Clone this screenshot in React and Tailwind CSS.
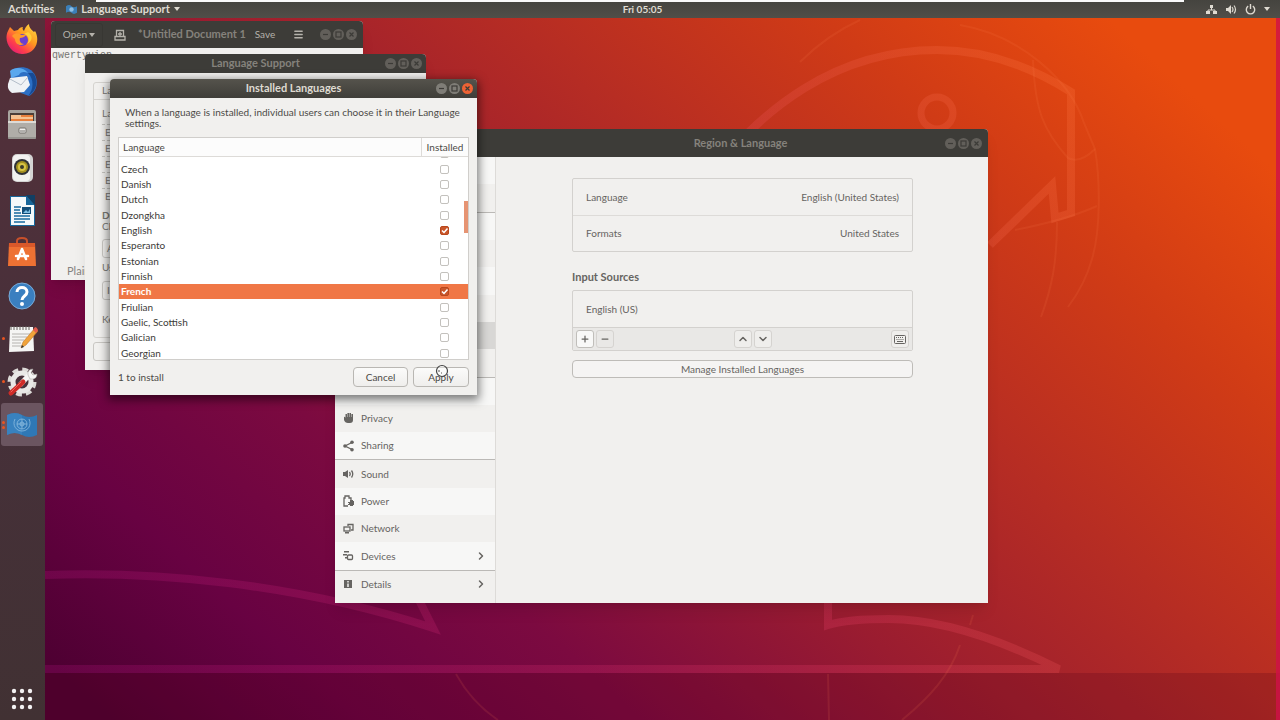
import { useEffect, useRef, useState } from 'react';
import { ChevronRight, ChevronUp, ChevronDown, Plus, Minus, Menu } from 'lucide-react';
import clsx from 'clsx';

const languages = [
  'Croatian',
  'Czech',
  'Danish',
  'Dutch',
  'Dzongkha',
  'English',
  'Esperanto',
  'Estonian',
  'Finnish',
  'French',
  'Friulian',
  'Gaelic, Scottish',
  'Galician',
  'Georgian',
];

const menuLanguages = ['en_US', 'en', 'en_AU', 'en_CA', 'en_GB'];

/* ---------- Wallpaper ---------- */

const Wallpaper = () => (
  <svg className="absolute inset-0 h-full w-full" viewBox="0 0 1280 720" preserveAspectRatio="none" aria-hidden="true">
    <defs>
      <linearGradient id="sky" gradientUnits="userSpaceOnUse" x1="200" y1="800" x2="1000" y2="-80">
        <stop offset="0" stopColor="#4e0032" />
        <stop offset="0.14" stopColor="#680242" />
        <stop offset="0.3" stopColor="#7c0a40" />
        <stop offset="0.48" stopColor="#9a1c30" />
        <stop offset="0.66" stopColor="#b52c24" />
        <stop offset="0.84" stopColor="#d03b16" />
        <stop offset="1" stopColor="#e84b0e" />
      </linearGradient>
      <linearGradient id="line" gradientUnits="userSpaceOnUse" x1="45" y1="700" x2="1100" y2="60">
        <stop offset="0" stopColor="#b01080" stopOpacity="0.24" />
        <stop offset="0.6" stopColor="#d8385a" stopOpacity="0.32" />
        <stop offset="1" stopColor="#ff7a3c" stopOpacity="0.25" />
      </linearGradient>
    </defs>
    <rect width="1280" height="720" fill="url(#sky)" />
    <rect y="673" width="1280" height="47" fill="#500018" fillOpacity="0.22" />
    <g fill="none" stroke="url(#line)" strokeWidth="8">
      <path d="M700 190C760 105 840 50 937 50c50 0 96 18 134 42v121l-16 5-3-33-62 60" />
      <circle cx="937" cy="113" r="16" strokeWidth="7" />
      <path d="M45 575c110-4 250 8 388 53l-15-30" />
      <path d="M45 669h1014c-60-30-120-50-170-50-30 0-48 2-61 6v-25" />
    </g>
    <g fill="none" stroke="#ff8050" strokeOpacity="0.12" strokeWidth="2">
      <path d="M960 25c60 10 110 55 124 98l11 26c5 30 6 80-3 110-5 18-12 32-24 48" />
      <path d="M1033 60c2 50 10 70 35 98 10 5 20-2 27-9" />
      <path d="M1015 230c30-6 60-14 82-24" />
      <path d="M1057 222c0 40-5 65-16 95" />
      <path d="M860 20c-22 10-42 24-60 42" />
      <path d="M828 674l1 46M960 645c-10 30-30 52-58 75M973 615l-3 10" />
      <path d="M456 674c10 18 24 34 42 46" />
    </g>
    <rect x="1276" y="18" width="4" height="702" fill="#d01048" fillOpacity="0.8" />
  </svg>
);

/* ---------- Dock icons ---------- */

const FirefoxIcon = () => (
  <svg viewBox="0 0 32 32" className="size-8">
    <defs>
      <linearGradient id="fox" x1="1" y1="0" x2="0.2" y2="1">
        <stop offset="0" stopColor="#ffe14a" />
        <stop offset="0.45" stopColor="#ff9a1f" />
        <stop offset="0.75" stopColor="#ff3f4b" />
        <stop offset="1" stopColor="#e01a7a" />
      </linearGradient>
    </defs>
    <path d="M2 8l2-4 4 4 4-1c1-2 3-3 5-3-1 2 0 3 1 4 1-3 2-5 5-7 0 4 3 6 5 8l1-1c5 8 2 22-12 23C5 32-3 18 2 8z" fill="url(#fox)" />
    <circle cx="16" cy="17" r="6" fill="#6b3fd0" />
    <path d="M6 13c3-4 7-3 9-1h5c-1 2-4 3-6 3-1 3 1 6 4 6-5 3-9-1-9-5z" fill="#ff9a2a" />
    <path d="M18 11c5 1 6 7 3 10 6-3 6-9 1-12z" fill="#ffcf3a" />
  </svg>
);

const ThunderbirdIcon = () => (
  <svg viewBox="0 0 32 32" className="size-8">
    <path d="M6 4C14-1 25 1 29 9c4 8 1 17-6 21l-8-3L4 15z" fill="#2c6fc4" />
    <path d="M4 5c6-5 14-3 18 2-4-2-8-1-9 2l-8 3z" fill="#5aa8ee" />
    <path d="M22 7c6 6 6 16 0 23 9-5 11-16 5-23z" fill="#174a94" />
    <path d="M4 12l17-2 3 9-6 7-12 1q-5-3-4-9z" fill="#eff2f5" />
    <path d="M4 13l11 6 7-8" fill="none" stroke="#b3bdc9" />
  </svg>
);

const FilesIcon = () => (
  <svg viewBox="0 0 32 32" className="size-8">
    <rect x="2" y="1" width="28" height="15" rx="2" fill="#a8a59f" />
    <rect x="4" y="4" width="24" height="10" fill="#4c3f38" />
    <rect x="5" y="6" width="22" height="8" fill="#e8803c" />
    <path d="M5 6h10v2h12v2H5z" fill="#f6c392" />
    <rect x="2" y="12" width="28" height="18" rx="1" fill="#b0ada8" />
    <path d="M2 12h28v2H2z" fill="#dddbd7" />
    <path d="M2 29h28" stroke="#7d7a76" />
    <rect x="13" y="19" width="7" height="5" rx="1" fill="#f1f0ee" stroke="#74716c" />
    <path d="M14 22h5" stroke="#74716c" />
  </svg>
);

const RhythmboxIcon = () => (
  <svg viewBox="0 0 32 32" className="size-8">
    <rect x="6" y="2" width="21" height="28" rx="5" fill="#d4d4d3" />
    <rect x="7" y="3" width="17" height="26" rx="4" fill="#f2f2f1" />
    <circle cx="16" cy="15" r="8" fill="#303236" />
    <circle cx="16" cy="15" r="6" fill="#a4901f" />
    <circle cx="16" cy="15" r="4" fill="#d8c444" />
    <circle cx="16" cy="15" r="2" fill="#3b3a2a" />
  </svg>
);

const WriterIcon = () => (
  <svg viewBox="0 0 32 32" className="size-8">
    <path d="M4 1h17l8 9v21H4z" fill="#17669a" />
    <path d="M5 2h15v8h8v20H5z" fill="#f4f8fa" />
    <path d="M20 0h9v10z" fill="#123f63" />
    <path d="M8 12h7M8 15h6M8 18h7M8 21h16M8 24h16M8 27h11" stroke="#176a9e" strokeWidth="1.5" />
    <rect x="16" y="12" width="9" height="7" fill="#124d78" />
    <path d="M17 18l3-3 2 2 2-3v4z" fill="#7fc0e4" />
  </svg>
);

const SoftwareIcon = () => (
  <svg viewBox="0 0 32 32" className="size-8">
    <path d="M11 7V4q0-3 5-3t5 3v3" fill="none" stroke="#c8502a" strokeWidth="2" />
    <path d="M3 6h26l1 23H2z" fill="#ee7133" />
    <path d="M3 6h26v4H3z" fill="#d9582a" />
    <path d="M16 12l-4 10M16 12l4 10M10 19h12" fill="none" stroke="#fff" strokeWidth="2.5" strokeLinecap="round" />
  </svg>
);

const HelpIcon = () => (
  <svg viewBox="0 0 32 32" className="size-8">
    <circle cx="16" cy="16" r="13" fill="#3a7fc0" stroke="#78abd9" />
    <path d="M11 12c0-6 10-6 10 0 0 4-5 4-5 8" fill="none" stroke="#fff" strokeWidth="3" />
    <circle cx="16" cy="24" r="2" fill="#fff" />
  </svg>
);

const NotesIcon = () => (
  <svg viewBox="0 0 32 32" className="size-8">
    <path d="M4 4h23l1 24-25 1z" fill="#f5f5f4" />
    <path d="M5 3v4M8 3v4M11 3v4M14 3v4M17 3v4M20 3v4M23 3v4" stroke="#66635f" />
    <path d="M6 11h18M6 14h15M6 17h12M6 20h9M6 23h12" stroke="#b5b3b0" />
    <path d="M15 25l2-6L29 5l3 3-12 14z" fill="#f0a33a" stroke="#b56b1c" strokeWidth="0.5" />
    <path d="M27 7l2-3q2 0 3 3l-2 3z" fill="#e45c50" />
    <path d="M15 25l1-3 2 2z" fill="#333" />
  </svg>
);

const SettingsIcon = () => (
  <svg viewBox="0 0 32 32" className="size-8">
    <circle cx="16" cy="16" r="12.500" fill="none" stroke="#dcdad7" strokeWidth="4" strokeDasharray="5.8 4" />
    <circle cx="16" cy="16" r="9" fill="none" stroke="#e9e8e6" strokeWidth="5" />
    <path d="M14 19L24 8" stroke="#f6f5f4" strokeWidth="5" />
    <path d="M22 9q-1-6 5-6l-2 4 2 2 4-1q0 6-7 5z" fill="#f6f5f4" stroke="#a09d99" strokeWidth="0.5" />
    <path d="M5 27L17 16" stroke="#cf2b27" strokeWidth="5" strokeLinecap="round" />
    <path d="M5 26L15 16" stroke="#ee6560" strokeLinecap="round" />
  </svg>
);

const FlagIcon = () => (
  <svg viewBox="0 0 32 32" className="size-8">
    <path d="M1 6q8-4 15 0t15 0v20q-8 4-15 0t-15 0z" fill="#2f78b6" />
    <path d="M1 6q8-4 15 0v20q-8-4-15 0z" fill="#3f89c4" fillOpacity="0.6" />
    <g fill="none" stroke="#8dbce0" strokeWidth="0.8">
      <circle cx="16" cy="15" r="5" />
      <circle cx="16" cy="15" r="2" />
      <path d="M11 15h10M16 10v10M9 10c-3 6 1 12 7 12s10-6 7-12" />
    </g>
  </svg>
);

const dockItems = [
  { name: 'Firefox', Icon: FirefoxIcon },
  { name: 'Thunderbird', Icon: ThunderbirdIcon },
  { name: 'Files', Icon: FilesIcon },
  { name: 'Rhythmbox', Icon: RhythmboxIcon },
  { name: 'LibreOffice Writer', Icon: WriterIcon },
  { name: 'Ubuntu Software', Icon: SoftwareIcon },
  { name: 'Help', Icon: HelpIcon },
  { name: 'Text Editor', Icon: NotesIcon, windows: 1 },
  { name: 'Settings', Icon: SettingsIcon, windows: 1 },
  { name: 'Language Support', Icon: FlagIcon, windows: 2, active: true },
];

/* ---------- Settings sidebar icons ---------- */

const PrivacyIcon = () => (
  <svg viewBox="0 0 12 12" className="size-3" fill="currentColor">
    <path d="M1 5q1-1 1.500 1V2H4v3h.4V1H6v4h.4V1H8v4h.4V2H10v6q0 3-3 3H5Q2 11 1 8z" />
  </svg>
);

const SharingIcon = () => (
  <svg viewBox="0 0 12 12" className="size-3" fill="currentColor">
    <path d="M9 2.500L2 6l7 3.500" fill="none" stroke="currentColor" strokeWidth="1.300" />
    <circle cx="9" cy="2.300" r="1.800" />
    <circle cx="2" cy="6" r="1.800" />
    <circle cx="9" cy="9.700" r="1.800" />
  </svg>
);

const SoundIcon = () => (
  <svg viewBox="0 0 12 12" className="size-3">
    <path d="M0 4h2l3-2v8L2 8H0z" fill="currentColor" />
    <path d="M6.500 4q1.500 2 0 4M8.500 2.500q2.500 3.500 0 7" fill="none" stroke="currentColor" strokeWidth="1.300" />
  </svg>
);

const PowerIcon = () => (
  <svg viewBox="0 0 12 12" className="size-3">
    <path d="M5 11H1V3h1V1h4v2h2v2" fill="none" stroke="currentColor" strokeWidth="1.300" />
    <path d="M7 5h3v1h1v4h-1v1H7v-1H5V9h1V8H5V7h2z" fill="currentColor" />
  </svg>
);

const NetworkIcon = () => (
  <svg viewBox="0 0 12 12" className="size-3">
    <path d="M5 3V1.500h5V7H8" fill="none" stroke="currentColor" strokeWidth="1.300" />
    <rect x="1" y="4" width="6" height="4" fill="none" stroke="currentColor" strokeWidth="1.300" />
    <path d="M2 9h4v1.500H2z" fill="currentColor" />
  </svg>
);

const DevicesIcon = () => (
  <svg viewBox="0 0 12 12" className="size-3">
    <path d="M1 1h5v1.500H1zM0 4h4v1.500H0zM2 7h2v1.500H2z" fill="currentColor" />
    <rect x="4.500" y="5" width="5" height="4.500" rx="1" fill="none" stroke="currentColor" strokeWidth="1.300" />
  </svg>
);

const DetailsIcon = () => (
  <svg viewBox="0 0 12 12" className="size-3">
    <rect x="1" y="2" width="8" height="8" fill="currentColor" />
    <path d="M5 3v1.500M5 5.500v3.500" stroke="#f2f1f0" strokeWidth="1.500" />
  </svg>
);

// The first rows of the panel list stay behind the dialog
const sidebarRows = [
  { id: 'wifi', light: true },
  { id: 'bluetooth', line: true },
  { id: 'background', light: true },
  { id: 'dock' },
  { id: 'notifications', light: true },
  { id: 'search' },
  { id: 'region', selected: true },
  { id: 'access', line: true },
  { id: 'accounts', light: true },
  { id: 'privacy', label: 'Privacy', Icon: PrivacyIcon },
  { id: 'sharing', label: 'Sharing', Icon: SharingIcon, light: true, line: true },
  { id: 'sound', label: 'Sound', Icon: SoundIcon },
  { id: 'power', label: 'Power', Icon: PowerIcon, light: true },
  { id: 'network', label: 'Network', Icon: NetworkIcon },
  { id: 'devices', label: 'Devices', Icon: DevicesIcon, more: true, light: true, line: true },
  { id: 'details', label: 'Details', Icon: DetailsIcon, more: true },
];

/* ---------- Shared parts ---------- */

const WindowButtons = ({ active }) => (
  <div className="flex gap-[2px] justify-self-end pr-1">
    <button aria-label="Minimize" className="size-[11px]">
      <svg viewBox="0 0 11 11" className={active ? 'text-[#7f7d77]' : 'text-[#625f5a]'}>
        <circle cx="5.500" cy="5.500" r="5.500" fill="currentColor" />
        <path d="M3 5.500h5" stroke="#3c3b37" strokeWidth="1.200" />
      </svg>
    </button>
    <button aria-label="Maximize" className="size-[11px]">
      <svg viewBox="0 0 11 11" className={active ? 'text-[#7f7d77]' : 'text-[#625f5a]'}>
        <circle cx="5.500" cy="5.500" r="5.500" fill="currentColor" />
        <rect x="3" y="3" width="5" height="5" fill="none" stroke="#3c3b37" strokeWidth="1.200" />
      </svg>
    </button>
    <button aria-label="Close" className="size-[11px]">
      <svg viewBox="0 0 11 11" className={active ? 'text-[#ee6234]' : 'text-[#625f5a]'}>
        <circle cx="5.500" cy="5.500" r="5.500" fill="currentColor" />
        <path d="M3.500 3.500l4 4M7.500 3.500l-4 4" stroke="#3c3b37" strokeWidth="1.200" />
      </svg>
    </button>
  </div>
);

const TitleBar = ({ title, active }) => (
  <header
    className={clsx(
      'grid h-[19px] grid-cols-[1fr_auto_1fr] items-center rounded-t-[4px] text-[11px] font-bold',
      active ? 'bg-linear-to-b from-[#55534c] to-[#3f3e39] text-[#dfdbd2]' : 'bg-[#3d3c38] text-[#85827c]'
    )}
  >
    <span />
    <h2>{title}</h2>
    <WindowButtons active={active} />
  </header>
);

const TopBar = () => (
  <header className="relative grid h-[18px] grid-cols-[1fr_auto_1fr] items-center bg-linear-to-b from-[#45443f] to-[#504e48] text-[11px] font-bold text-[#dfdbd2]">
    <div className="absolute top-0 right-24 left-24 h-[2px] bg-[#fafafa]" />
    <div className="flex items-center pl-2">
      <button>Activities</button>
      <button className="ml-3 flex items-center gap-1">
        <svg viewBox="0 0 10 10" className="size-[11px]">
          <path d="M0 2q3-2 5 0t5 0v6q-3 2-5 0t-5 0z" fill="#3b7fb8" />
          <circle cx="5" cy="5" r="2" fill="#8fbfe2" />
        </svg>
        Language Support
        <svg viewBox="0 0 6 4" className="h-1 w-[6px]" fill="currentColor">
          <path d="M0 0h6L3 4z" />
        </svg>
      </button>
    </div>
    <button className="pl-[5px] text-[10px]">Fri 05:05</button>
    <button aria-label="System menu" className="flex items-center gap-2 justify-self-end pr-[10px]">
      <svg viewBox="0 0 11 11" className="size-[11px]" fill="currentColor">
        <path d="M4 1h3v3H4zM0 7h4v3H0zM7 7h4v3H7z" />
        <path d="M5.500 4v2M2 7.500V6h7v1.500" fill="none" stroke="currentColor" />
      </svg>
      <svg viewBox="0 0 12 11" className="h-[11px] w-3">
        <path d="M1 4h2l3-3v9L3 7H1z" fill="currentColor" />
        <path d="M7 3q2 2.500 0 5M9 1.500q3 4 0 8" fill="none" stroke="currentColor" strokeWidth="1.200" />
      </svg>
      <svg viewBox="0 0 11 11" className="size-[11px]" fill="none" stroke="currentColor" strokeWidth="1.400">
        <path d="M3.200 2.200a4.200 4.200 0 1 0 4.600 0M5.500 0v5" />
      </svg>
      <svg viewBox="0 0 6 4" className="h-1 w-[6px]" fill="currentColor">
        <path d="M0 0h6L3 4z" />
      </svg>
    </button>
  </header>
);

const Dock = () => (
  <nav className="relative flex w-[45px] flex-col justify-between bg-linear-to-b from-[#55303a] via-[#47303a] to-[#413133]">
    <ul className="flex h-[428px] flex-col">
      {dockItems.map(({ name, Icon, windows = 0, active }) => (
        <li key={name} className="relative flex-1 pr-[2px] pl-px">
          <button
            aria-label={name}
            className={clsx('flex h-full w-full items-center justify-center rounded-[3px]', active && 'bg-[#6b5560]')}
          >
            <Icon />
          </button>
          <div className="absolute inset-y-0 left-[2px] flex flex-col justify-center gap-[2px]">
            {[...Array(windows)].map((_, i) => (
              <span key={i} className="size-[3px] rounded-full bg-[#e95420]" />
            ))}
          </div>
        </li>
      ))}
    </ul>
    <button aria-label="Show Applications" className="mb-[10px] flex justify-center pr-px">
      <svg viewBox="0 0 22 22" className="size-[22px]" fill="#f4f2f3">
        {[3, 11, 19].map((y) => [3, 11, 19].map((x) => <circle key={`${x}-${y}`} cx={x} cy={y} r="2.200" />))}
      </svg>
    </button>
  </nav>
);

/* ---------- Windows ---------- */

const EditorWindow = () => (
  <section className="absolute top-[21px] left-[51px] flex h-[259px] w-[312px] flex-col rounded-t-[4px] bg-[#f1f0ee] shadow-lg">
    <header className="flex h-[27px] shrink-0 items-center rounded-t-[4px] bg-[#3d3c38] text-[10px] text-[#b5b2ab]">
      <button className="ml-1 flex h-6 w-12 items-center justify-center gap-[2px] rounded-[3px] border border-[#383733]">
        Open
        <svg viewBox="0 0 6 4" className="h-1 w-[6px]" fill="currentColor">
          <path d="M0 0h6L3 4z" />
        </svg>
      </button>
      <button aria-label="New document" className="ml-[11px]">
        <svg viewBox="0 0 12 12" className="size-3" fill="none" stroke="currentColor" strokeWidth="1.300">
          <path d="M2.500 7V1.500h7V7M1 7.500h10V11H1zM6 3v4M4 5h4" />
        </svg>
      </button>
      <h2 className="flex-1 pl-3 text-[11px] font-bold whitespace-nowrap text-[#85827c]">*Untitled Document 1</h2>
      <button className="w-9">Save</button>
      <button aria-label="Menu" className="mr-4 ml-[10px]">
        <Menu className="size-[11px]" strokeWidth={3} />
      </button>
      <div className="pr-[2px]">
        <WindowButtons />
      </div>
    </header>
    <textarea
      aria-label="Document text"
      className="w-full flex-1 resize-none px-px font-['Liberation_Mono',monospace] text-[10px] text-[#777672] outline-none"
      defaultValue="qwertyuiop"
    />
    <footer className="h-[18px] pl-4 text-[11px] leading-[18px] text-[#85827e]">Plain</footer>
  </section>
);

const SupportWindow = () => (
  <section className="absolute top-[54px] left-[85px] w-[341px] rounded-t-[4px] bg-[#f1f0ee] text-[10px] text-[#7a7874] shadow-lg">
    <TitleBar title="Language Support" />
    <div className="px-2 pt-[9px] pb-[9px]">
      <div className="rounded-[3px] border border-[#d5d3cf]">
        <div className="h-[17px] border-b border-[#d5d3cf] pl-2 leading-[15px]">
          <button>Lang</button>
        </div>
        <div className="px-2 pt-[6px]">
          <p className="h-[18px] leading-[14px]">Lang</p>
          <ul>
            {menuLanguages.map((code) => (
              <li key={code} className="h-4 border-t border-dashed border-[#c4c2be] pl-[3px] leading-[15px]">
                En
              </li>
            ))}
          </ul>
          <p className="mt-[6px] leading-[11px] font-bold">Drag</p>
          <p className="leading-[10px]">Ch</p>
          <button className="mt-2 block h-[19px] rounded-[3px] border border-[#c9c7c3] px-1">Ap</button>
          <p className="mt-[2px] leading-[14px]">Use</p>
          <button className="mt-[7px] block h-[19px] rounded-[3px] border border-[#c9c7c3] px-1">Ins</button>
          <p className="mt-3 h-[25px] leading-[14px]">Key</p>
        </div>
      </div>
      <button aria-label="Help" className="mt-1 block h-[19px] w-20 rounded-[3px] border border-[#c9c7c3]" />
    </div>
  </section>
);

const SettingsWindow = () => (
  <section className="absolute top-[129px] left-[335px] flex h-[474px] w-[653px] flex-col rounded-t-[4px] bg-[#f1f0ee] text-[10px] text-[#666461] shadow-lg">
    <header className="flex h-7 shrink-0 rounded-t-[4px] bg-[#3d3c38]">
      <div className="w-[160px]" />
      <div className="grid flex-1 grid-cols-[1fr_auto_1fr] items-center pr-[2px] text-[11px] font-bold text-[#85827c]">
        <span />
        <h2>Region &amp; Language</h2>
        <WindowButtons />
      </div>
    </header>
    <div className="flex flex-1">
      <nav className="w-[161px] border-r border-[#dddbd8]">
        <ul className="flex h-[441px] flex-col">
          {sidebarRows.map(({ id, label, Icon, more, light, line, selected }) => (
            <li
              key={id}
              className={clsx(
                'flex flex-1 items-center pl-2',
                line && 'border-b border-[#bbb9b6]',
                light && 'bg-[#f7f7f6]',
                selected && 'bg-[#d8d7d5]'
              )}
            >
              {label && (
                <a href="#" className="flex flex-1 items-center">
                  <Icon />
                  <span className="ml-[6px] flex-1">{label}</span>
                  {more && <ChevronRight className="mr-2 size-3" strokeWidth={3} />}
                </a>
              )}
            </li>
          ))}
        </ul>
      </nav>
      <main className="flex-1 pt-[21px] pr-[75px] pl-[76px]">
        <dl className="rounded-[2px] border border-[#d3d1ce] px-[13px]">
          <div className="flex h-9 items-center justify-between">
            <dt>Language</dt>
            <dd>English (United States)</dd>
          </div>
          <div className="-mx-[13px] flex h-9 items-center justify-between border-t border-[#dddbd8] px-[13px]">
            <dt>Formats</dt>
            <dd>United States</dd>
          </div>
        </dl>
        <h3 className="mt-[17px] mb-[5px] text-[11px] leading-4 font-bold">Input Sources</h3>
        <div className="rounded-[2px] border border-[#d3d1ce]">
          <p className="flex h-9 items-center px-[13px]">English (US)</p>
          <div className="flex h-[23px] items-center justify-between border-t border-[#d3d1ce] bg-[#e9e8e6] px-[3px]">
            <div className="flex gap-[2px]">
              <button aria-label="Add" className="flex h-[18px] w-[18px] items-center justify-center rounded-[3px] border border-[#c0beba] bg-[#f8f8f7]">
                <Plus className="size-[10px]" strokeWidth={3} />
              </button>
              <button aria-label="Remove" className="flex h-[18px] w-[18px] items-center justify-center rounded-[3px] border border-[#d5d3d0]">
                <Minus className="size-[10px]" strokeWidth={3} />
              </button>
            </div>
            <div className="flex gap-[2px]">
              <button aria-label="Move up" className="flex h-[18px] w-[18px] items-center justify-center rounded-[3px] border border-[#d5d3d0] bg-[#efeeec]">
                <ChevronUp className="size-3" strokeWidth={3} />
              </button>
              <button aria-label="Move down" className="flex h-[18px] w-[18px] items-center justify-center rounded-[3px] border border-[#d5d3d0] bg-[#efeeec]">
                <ChevronDown className="size-3" strokeWidth={3} />
              </button>
            </div>
            <button aria-label="Keyboard layout" className="flex h-[18px] w-[18px] items-center justify-center rounded-[3px] border border-[#d5d3d0] bg-[#efeeec]">
              <svg viewBox="0 0 12 9" className="h-[9px] w-3">
                <rect x="0.500" y="0.500" width="11" height="8" rx="1" fill="#f1f0ee" stroke="currentColor" />
                <path d="M2 2.500h8M2.500 4.500h8" stroke="currentColor" strokeDasharray="1 1" />
                <path d="M3 6.500h6" stroke="currentColor" />
              </svg>
            </button>
          </div>
        </div>
        <button className="mt-[9px] block h-[18px] w-full rounded-[4px] border border-[#bebcb8] bg-[#f5f4f3] leading-4">Manage Installed Languages</button>
      </main>
    </div>
  </section>
);

const LanguageRow = ({ name, checked, selected, onToggle }) => (
  <tr className={selected ? 'bg-[#f07746] font-bold text-white' : 'text-[#3c3b38]'}>
    <td className="pl-[2px] leading-[15px]">
      <label htmlFor={`lang-${name}`}>{name}</label>
    </td>
    <td className="leading-[15px]">
      <div className="relative mx-auto size-[9px]">
        <input
          id={`lang-${name}`}
          type="checkbox"
          checked={checked}
          onChange={onToggle}
          className="block size-[9px] appearance-none rounded-[2px] border border-[#c3c1bd] bg-white checked:border-[#b9471c] checked:bg-[#c9562a]"
        />
        {checked && (
          <svg viewBox="0 0 9 9" className="pointer-events-none absolute inset-0" fill="none" stroke="#fff" strokeWidth="1.500">
            <path d="M2 4.500l2 2L7.500 2.500" />
          </svg>
        )}
      </div>
    </td>
  </tr>
);

const InstalledDialog = () => {
  const [installed, setInstalled] = useState(['English', 'French']);
  const listRef = useRef(null);

  useEffect(() => {
    listRef.current.scrollTop = 11;
  }, []);

  const toggle = (name) => {
    setInstalled((prev) => (prev.includes(name) ? prev.filter((n) => n !== name) : [...prev, name]));
  };

  return (
    <section
      role="dialog"
      aria-label="Installed Languages"
      className="absolute top-[79px] left-[110px] w-[367px] rounded-t-[4px] bg-[#f1f0ee] text-[10px] text-[#4c4a47] shadow-[0_3px_10px_2px_rgba(0,0,0,0.5)]"
    >
      <TitleBar title="Installed Languages" active />
      <div className="px-2 pt-[9px] pb-2">
        <p className="px-[7px] leading-[11px]">
          When a language is installed, individual users can choose it in their Language settings.
        </p>
        <div className="relative mt-2 border border-[#d0cecb] bg-white">
          <div ref={listRef} className="h-[221px] overflow-y-auto [scrollbar-width:none]">
            <table className="h-[234px] w-full border-separate border-spacing-0">
              <thead className="sticky top-0 z-10">
                <tr className="h-[19px] bg-[#fcfcfc] text-left">
                  <th className="border-b border-[#dddbd8] pl-1 leading-[18px] font-normal">Language</th>
                  <th className="w-[47px] border-b border-l border-[#dddbd8] text-center leading-[18px] font-normal">Installed</th>
                </tr>
              </thead>
              <tbody>
                {languages.map((name) => (
                  <LanguageRow
                    key={name}
                    name={name}
                    checked={installed.includes(name)}
                    selected={name === 'French'}
                    onToggle={() => toggle(name)}
                  />
                ))}
              </tbody>
            </table>
          </div>
          <div className="absolute top-[63px] right-0 z-20 h-8 w-1 bg-[#e69473]" />
        </div>
        <div className="mt-[7px] flex items-center gap-[5px]">
          <p className="flex-1">1 to install</p>
          <button className="h-5 w-[55px] rounded-[4px] border border-[#b9b7b3] bg-linear-to-b from-[#fbfbfa] to-[#efeeec]">Cancel</button>
          <button className="h-5 w-14 rounded-[4px] border border-[#b9b7b3] bg-linear-to-b from-[#fbfbfa] to-[#efeeec]">Apply</button>
        </div>
      </div>
    </section>
  );
};

const BusyCursor = () => (
  <svg viewBox="0 0 14 14" className="pointer-events-none absolute top-[364px] left-[435px] size-[14px]">
    <circle cx="7" cy="7" r="5.500" fill="#fff" fillOpacity="0.4" stroke="#444" strokeWidth="1.200" />
    <path d="M4 6v2M6 9h1" stroke="#555" />
  </svg>
);

const App = () => (
  <div className="relative flex h-screen flex-col overflow-hidden font-['Lato','Open_Sans',sans-serif]">
    <Wallpaper />
    <TopBar />
    <div className="flex flex-1">
      <Dock />
    </div>
    <SettingsWindow />
    <EditorWindow />
    <SupportWindow />
    <InstalledDialog />
    <BusyCursor />
  </div>
);

export default App;
